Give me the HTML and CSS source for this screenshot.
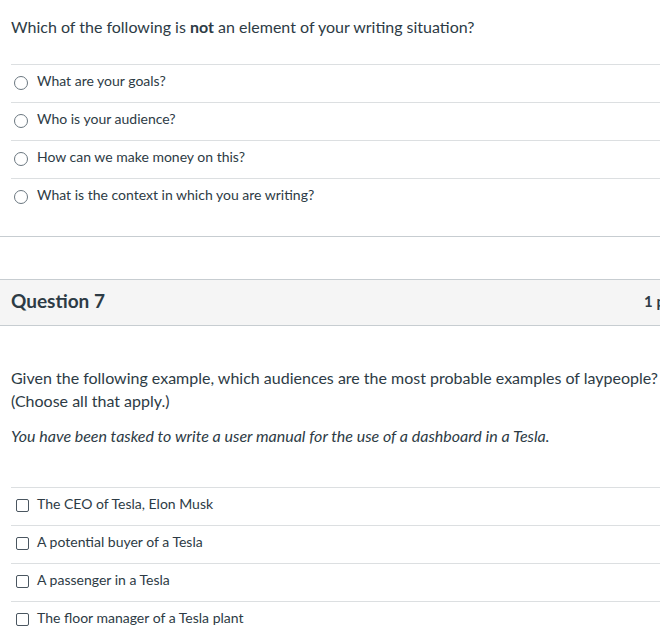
FILE: index.html
```html
<!DOCTYPE html>
<html>
<head>
<meta charset="utf-8">
<link rel="stylesheet" href="styles.css">
</head>
<body>
<div class="page">
  <div class="question q-prev">
    <div class="q-text">Which of the following is <strong>not</strong> an element of your writing situation?</div>
    <ul class="answers">
      <li class="answer"><span class="radio"></span><span>What are your goals?</span></li>
      <li class="answer"><span class="radio"></span><span>Who is your audience?</span></li>
      <li class="answer"><span class="radio"></span><span>How can we make money on this?</span></li>
      <li class="answer"><span class="radio"></span><span>What is the context in which you are writing?</span></li>
    </ul>
  </div>

  <div class="question q-next">
    <div class="q-header">
      <h2 class="q-title">Question 7</h2>
      <span class="q-points">1 pts</span>
    </div>
    <div class="q-body">
      <p class="q-text2">Given the following example, which audiences are the most probable examples of laypeople? (Choose all that apply.)</p>
      <p class="q-example"><em>You have been tasked to write a user manual for the use of a dashboard in a Tesla.</em></p>
      <ul class="answers">
        <li class="answer"><span class="check"></span><span>The CEO of Tesla, Elon Musk</span></li>
        <li class="answer"><span class="check"></span><span>A potential buyer of a Tesla</span></li>
        <li class="answer"><span class="check"></span><span>A passenger in a Tesla</span></li>
        <li class="answer"><span class="check"></span><span>The floor manager of a Tesla plant</span></li>
      </ul>
    </div>
  </div>
</div>
</body>
</html>
```

FILE: styles.css
```css
html, body {
  margin: 0;
  padding: 0;
  background: #fff;
  overflow: hidden;
}
body {
  font-family: Lato, "Liberation Sans", sans-serif;
  color: #2d3b45;
}
.page {
  width: 700px;
}
.q-prev {
  padding: 15px 0 20px 0;
  border-bottom: 1px solid #c7cdd1;
}
.q-text {
  font-size: 16px;
  line-height: 24px;
  padding-left: 11px;
  margin-bottom: 25px;
}
.q-text strong {
  font-weight: 700;
}
.answers {
  list-style: none;
  margin: 0 0 0 11px;
  padding: 0;
  border-top: 1px solid #dcdfe1;
}
.answer {
  display: flex;
  align-items: center;
  font-size: 14px;
  line-height: 16px;
  border-bottom: 1px solid #dcdfe1;
  padding-left: 3px;
  padding-bottom: 5px;
  box-sizing: content-box;
  height: 32px;
}
.answer:last-child {
  border-bottom: none;
}
.radio {
  width: 12px;
  height: 12px;
  border: 1px solid #6b7780;
  border-radius: 50%;
  flex: none;
  margin-right: 9px;
  margin-top: 3px;
}
.check {
  width: 11px;
  height: 11px;
  border: 1px solid #4a5660;
  border-radius: 2px;
  flex: none;
  margin-left: 2px;
  margin-right: 8px;
  margin-top: 3px;
}
.q-next {
  margin-top: 42px;
}
.q-header {
  display: flex;
  align-items: center;
  height: 47px;
  background: #f5f5f5;
  border-top: 1px solid #c7cdd1;
  border-bottom: 1px solid #c7cdd1;
  padding: 0 23px 0 11px;
  width: 700px;
  box-sizing: border-box;
}
.q-title {
  margin: 0;
  font-size: 19px;
  font-weight: 700;
  color: #2d3b45;
  padding-bottom: 5px;
}
.q-points {
  margin-left: auto;
  font-size: 15px;
  font-weight: 700;
  padding-bottom: 4px;
}
.q-body {
  padding-top: 40px;
}
.q-text2 {
  margin: 0 0 12px 11px;
  font-size: 16px;
  line-height: 23px;
  width: 660px;
}
.q-example {
  margin: 0 0 40px 11px;
  font-size: 16px;
  line-height: 23px;
}
```
